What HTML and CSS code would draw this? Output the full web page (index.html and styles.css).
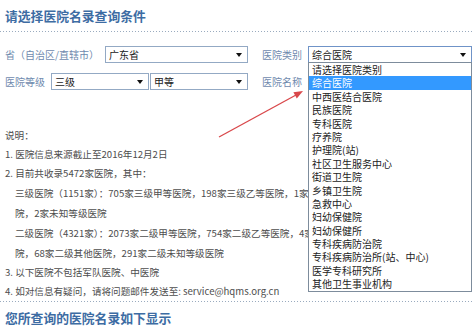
FILE: index.html
```html
<!DOCTYPE html>
<html lang="zh-CN">
<head>
<meta charset="utf-8">
<title>医院名录查询</title>
<link rel="stylesheet" href="styles.css">
</head>
<body>
<div class="page">
  <h2 class="section-title">请选择医院名录查询条件</h2>

  <div class="form-grid">
    <div class="field">
      <span class="field-label">省（自治区/直辖市）</span>
      <div class="select">广东省</div>
    </div>
    <div class="field">
      <span class="field-label">医院类别</span>
      <div class="select select-open">综合医院
        <ul class="dropdown">
          <li>请选择医院类别</li>
          <li class="active">综合医院</li>
          <li>中西医结合医院</li>
          <li>民族医院</li>
          <li>专科医院</li>
          <li>疗养院</li>
          <li>护理院(站)</li>
          <li>社区卫生服务中心</li>
          <li>街道卫生院</li>
          <li>乡镇卫生院</li>
          <li>急救中心</li>
          <li>妇幼保健院</li>
          <li>妇幼保健所</li>
          <li>专科疾病防治院</li>
          <li>专科疾病防治所(站、中心)</li>
          <li>医学专科研究所</li>
          <li>其他卫生事业机构</li>
        </ul>
      </div>
    </div>
    <div class="field">
      <span class="field-label">医院等级</span>
      <div class="select-pair">
        <div class="select">三级</div>
        <div class="select">甲等</div>
      </div>
    </div>
    <div class="field">
      <span class="field-label">医院名称</span>
      <div class="text-input"></div>
    </div>
  </div>

  <div class="notes">
    <p class="note-line">说明：</p>
    <p class="note-line">1. 医院信息来源截止至2016年12月2日</p>
    <p class="note-line">2. 目前共收录5472家医院，其中：</p>
    <p class="note-sub">三级医院（1151家）：705家三级甲等医院，198家三级乙等医院，1家医<br>院，2家未知等级医院</p>
    <p class="note-sub">二级医院（4321家）：2073家二级甲等医院，754家二级乙等医院，4家医<br>院，68家二级其他医院，291家二级未知等级医院</p>
    <p class="note-line">3. 以下医院不包括军队医院、中医院</p>
    <p class="note-line">4. 如对信息有疑问，请将问题邮件发送至: service@hqms.org.cn</p>
  </div>

  <h2 class="section-title section-title-results">您所查询的医院名录如下显示</h2>

  <svg class="annotation-arrow" width="100" height="60" viewBox="210 85 100 60" aria-hidden="true">
    <line x1="219" y1="137" x2="296" y2="95" stroke="#d9474a" stroke-width="1.3"/>
    <polygon points="303,91 296.8,98.4 293.4,92.2" fill="#d9474a"/>
  </svg>
</div>
</body>
</html>
```

FILE: styles.css
```css
* { box-sizing: border-box; }

html, body {
  margin: 0;
  padding: 0;
  background: #fff;
}

body {
  font-family: "Noto Sans CJK SC", "Microsoft YaHei", sans-serif;
  color: #4d4d4d;
}

.page {
  position: relative;
  width: 474px;
  height: 335px;
  overflow: hidden;
}

.section-title {
  margin: 0;
  padding: 8px 5px 8px;
  font-size: 12.8px;
  line-height: 16px;
  font-weight: bold;
  color: #3d6ca3;
  background-image: linear-gradient(to right, #9aabbf 1px, transparent 1px);
  background-size: 3px 1px;
  background-repeat: repeat-x;
  background-position: left bottom;
}

.section-title-results {
  padding-top: 9px;
  background-position: left top;
}

.form-grid {
  display: grid;
  grid-template-columns: 243px 1fr;
  column-gap: 14px;
  row-gap: 10px;
  margin: 14px 2px 0 5px;
}

.field {
  display: flex;
  align-items: center;
  gap: 6px;
  height: 17px;
}

.field-label {
  font-size: 10px;
  line-height: 17px;
  color: #6f8aae;
  white-space: nowrap;
}

.select-pair {
  flex: 1;
  display: flex;
  gap: 1px;
  height: 17px;
}

.select {
  position: relative;
  flex: 1;
  height: 17px;
  border: 1px solid #93a9c4;
  padding: 0 14px 0 3px;
  font-size: 10px;
  line-height: 15px;
  color: #222;
  background: #fff;
  white-space: nowrap;
}

.select::after {
  content: "";
  position: absolute;
  right: 5px;
  top: 6px;
  border-left: 3px solid transparent;
  border-right: 3px solid transparent;
  border-top: 4px solid #111;
}

.select-open {
  border-color: #6f93c8;
  z-index: 5;
}

.text-input {
  flex: 1;
  height: 17px;
  border: 1px solid #93a9c4;
  background: #fff;
}

.dropdown {
  position: absolute;
  left: -1px;
  right: -1px;
  top: 100%;
  margin: 0;
  padding: 0;
  list-style: none;
  background: #fff;
  border: 1px solid #7d8c9c;
}

.dropdown li {
  font-size: 10px;
  line-height: 13.4px;
  height: 13.4px;
  padding-left: 3px;
  color: #222;
}

.dropdown li.active {
  background: #3399ff;
  color: #fff;
}

.notes {
  margin-top: 36px;
  padding: 0 5px 0 5px;
  font-size: 9.6px;
  color: #4d4d4d;
}

.note-line {
  margin: 0;
  line-height: 19px;
  white-space: nowrap;
}

.note-sub {
  margin: 0;
  padding-left: 10px;
  line-height: 20px;
  white-space: nowrap;
}

.annotation-arrow {
  position: absolute;
  left: 210px;
  top: 85px;
  z-index: 4;
  pointer-events: none;
}
```
